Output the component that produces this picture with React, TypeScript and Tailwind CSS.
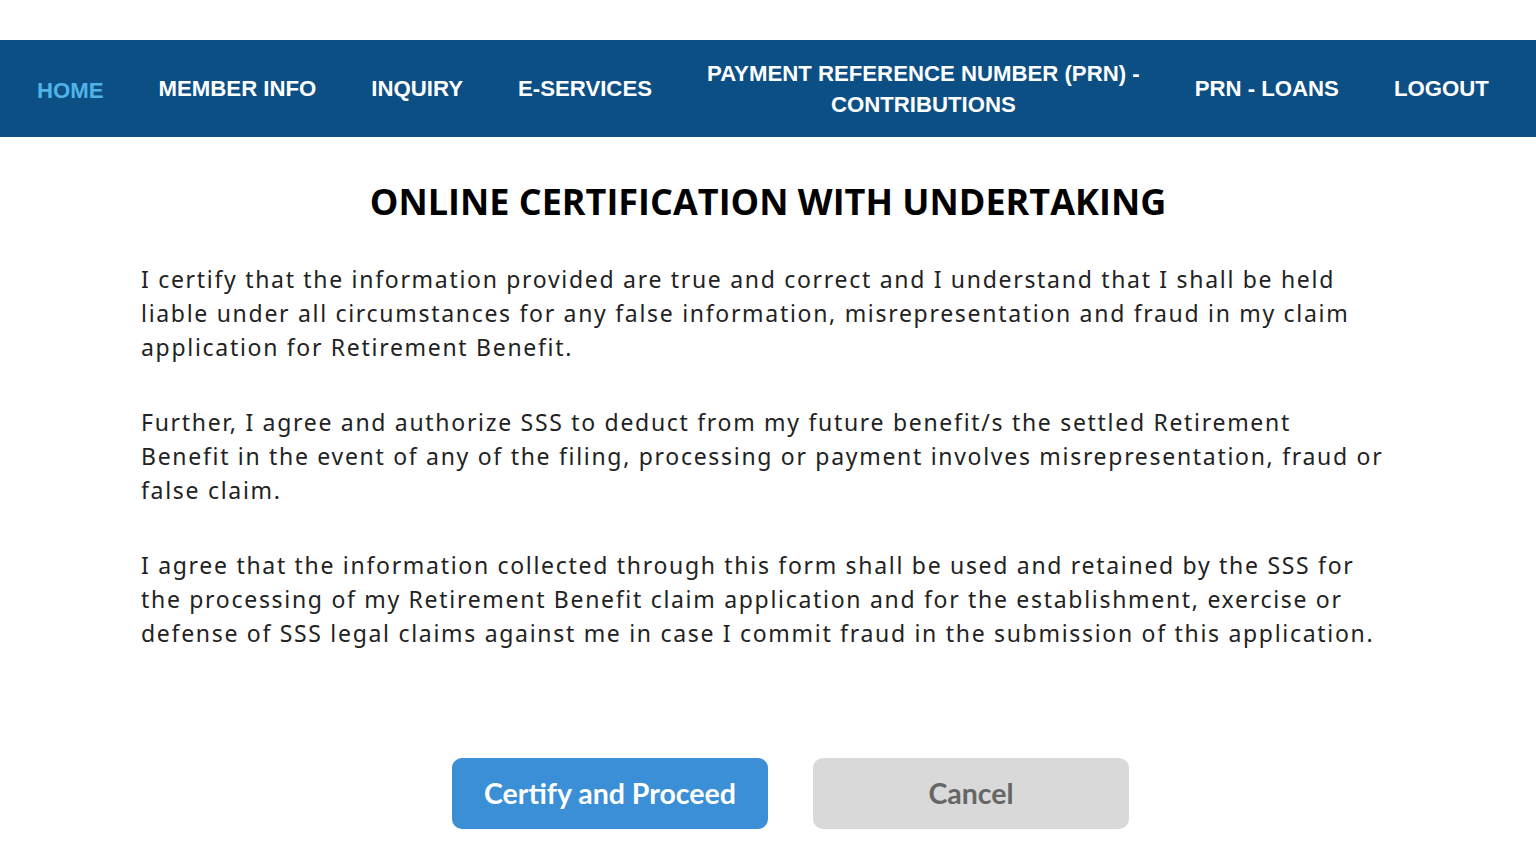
import React from 'react';

const navItems = [
  { label: 'HOME', active: true },
  { label: 'MEMBER INFO' },
  { label: 'INQUIRY' },
  { label: 'E-SERVICES' },
  { label: 'PAYMENT REFERENCE NUMBER (PRN) -', second: 'CONTRIBUTIONS' },
  { label: 'PRN - LOANS' },
  { label: 'LOGOUT' },
];

const paragraphs = [
  [
    'I certify that the information provided are true and correct and I understand that I shall be held',
    'liable under all circumstances for any false information, misrepresentation and fraud in my claim',
    'application for Retirement Benefit.',
  ],
  [
    'Further, I agree and authorize SSS to deduct from my future benefit/s the settled Retirement',
    'Benefit in the event of any of the filing, processing or payment involves misrepresentation, fraud or',
    'false claim.',
  ],
  [
    'I agree that the information collected through this form shall be used and retained by the SSS for',
    'the processing of my Retirement Benefit claim application and for the establishment, exercise or',
    'defense of SSS legal claims against me in case I commit fraud in the submission of this application.',
  ],
];

function NavBar() {
  return (
    <nav className="h-[97px] bg-[#0c4f85] flex items-center pl-[37px] gap-[55px] font-['Liberation_Sans',Arial,sans-serif] font-bold text-[22.2px]">
      {navItems.map((item) => (
        <a
          key={item.label}
          href="#"
          className={`text-center leading-[31px] whitespace-nowrap ${item.active ? 'text-[#4fb3e8] pt-[4px]' : 'text-white'}`}
        >
          {item.label}
          {item.second && (
            <>
              <br />
              {item.second}
            </>
          )}
        </a>
      ))}
    </nav>
  );
}

export default function App() {
  return (
    <div className="min-h-[864px] bg-white">
      <div className="h-[40px]" />
      <NavBar />
      <main className="px-[141px]">
        <h1 className="mt-[43px] text-center font-['Open_Sans',sans-serif] font-bold text-[36px] leading-[44px] text-black">
          ONLINE CERTIFICATION WITH UNDERTAKING
        </h1>
        <div className="mt-[38px] flex flex-col gap-[41px] font-['Noto_Sans',sans-serif] text-[23px] leading-[34px] tracking-[1.7px] text-[#222]">
          {paragraphs.map((lines, i) => (
            <p key={i}>
              {lines.map((line) => (
                <span key={line} className="block whitespace-nowrap">
                  {line}
                </span>
              ))}
            </p>
          ))}
        </div>
        <div className="mt-[108px] pl-[311px] flex gap-[45px] font-['Lato',sans-serif] font-bold text-[28.5px]">
          <button className="w-[316px] h-[71px] rounded-[10px] bg-[#3a8fd6] text-white">
            Certify and Proceed
          </button>
          <button className="w-[316px] h-[71px] rounded-[10px] bg-[#d9d9d9] text-[#666]">
            Cancel
          </button>
        </div>
      </main>
    </div>
  );
}
